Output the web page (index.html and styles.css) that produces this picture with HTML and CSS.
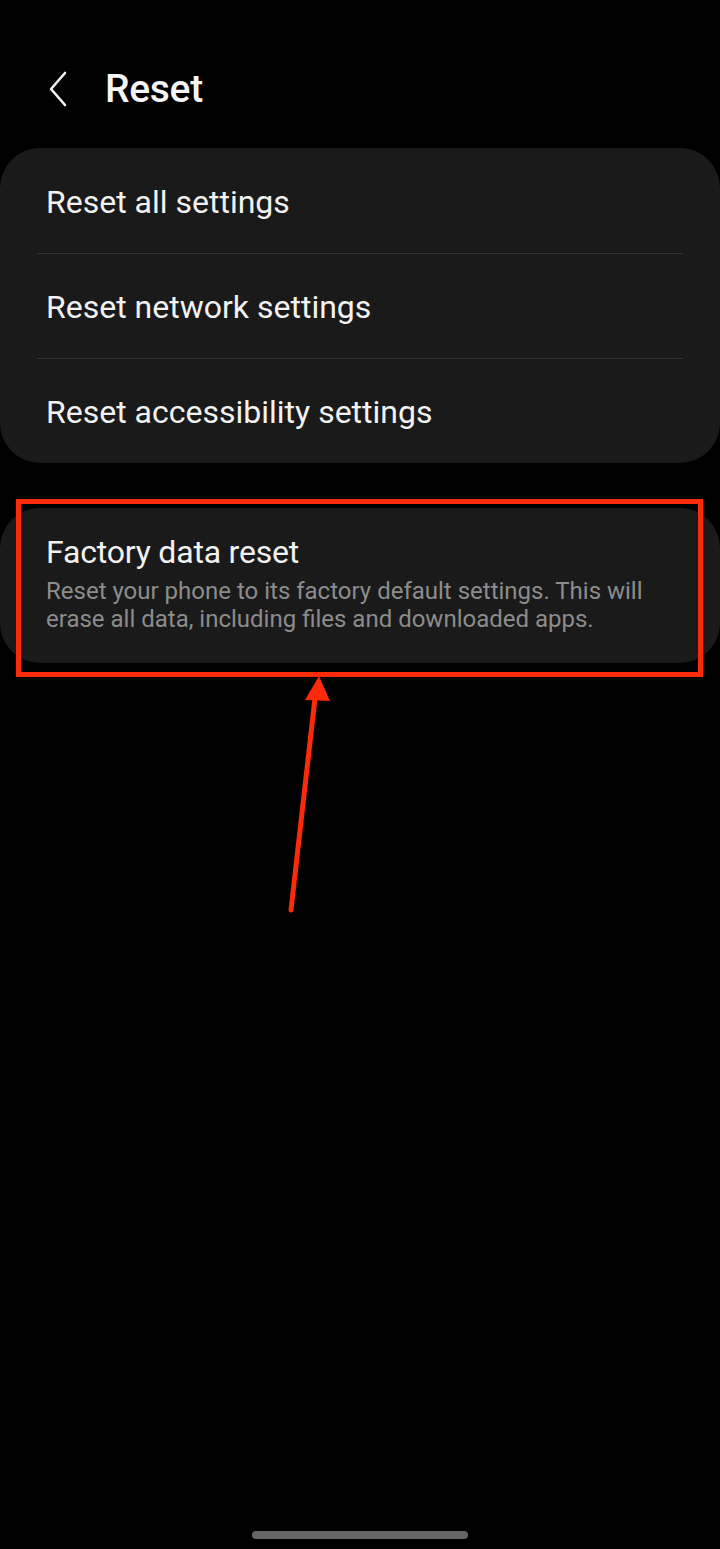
FILE: index.html
```html
<!DOCTYPE html>
<html lang="en">
<head>
<meta charset="utf-8">
<title>Reset</title>
<link rel="stylesheet" href="styles.css">
</head>
<body>
<div class="screen">
  <header class="header">
    <svg class="back" width="20" height="36" viewBox="0 0 20 36" aria-hidden="true">
      <path d="M17 2 L3 18 L17 34" fill="none" stroke="#f2f2f2" stroke-width="2.6" stroke-linecap="round" stroke-linejoin="round"/>
    </svg>
    <h1 class="title">Reset</h1>
  </header>

  <section class="card">
    <div class="row">Reset all settings</div>
    <div class="row">Reset network settings</div>
    <div class="row">Reset accessibility settings</div>
  </section>

  <section class="card card-factory">
    <div class="item-title">Factory data reset</div>
    <div class="item-sub">Reset your phone to its factory default settings. This will erase all data, including files and downloaded apps.</div>
  </section>

  <div class="highlight"></div>
  <svg class="arrow" width="720" height="1549" viewBox="0 0 720 1549" aria-hidden="true">
    <line x1="291" y1="910" x2="315" y2="698" stroke="#fa2a0a" stroke-width="5" stroke-linecap="round"/>
    <polygon points="319,676 305,700 330,701" fill="#fa2a0a"/>
  </svg>

  <div class="home-bar"></div>
</div>
</body>
</html>
```

FILE: styles.css
```css
html, body {
  margin: 0;
  padding: 0;
  background: #000;
}

.screen {
  position: relative;
  width: 720px;
  height: 1549px;
  background: #000;
  font-family: Roboto, "Noto Sans", "Liberation Sans", sans-serif;
  color: #f2f2f2;
  overflow: hidden;
}

.header {
  height: 148px;
  box-sizing: border-box;
  padding: 30px 0 0 48px;
  display: flex;
  align-items: center;
}

.back {
  display: block;
  margin-right: 37px;
}

.title {
  margin: 0;
  font-size: 39px;
  font-weight: 500;
  letter-spacing: -0.3px;
  color: #f5f5f5;
}

.card {
  background: #1a1a1a;
  border-radius: 40px;
  display: flex;
  flex-direction: column;
}

.row {
  height: 105px;
  box-sizing: border-box;
  padding: 3px 46px 0;
  display: flex;
  align-items: center;
  font-size: 32px;
  color: #f2f2f2;
  position: relative;
}

.row + .row::before {
  content: "";
  position: absolute;
  top: 0;
  left: 37px;
  right: 37px;
  height: 1px;
  background: #343434;
}

.card-factory {
  margin-top: 45px;
  height: 155px;
  box-sizing: border-box;
  padding: 26px 46px 0;
}

.item-title {
  font-size: 32px;
  line-height: 36px;
  letter-spacing: -0.2px;
  color: #f2f2f2;
}

.item-sub {
  margin-top: 7px;
  font-size: 24px;
  line-height: 28px;
  color: #8c8c8c;
}

.highlight {
  position: absolute;
  left: 16px;
  top: 499px;
  width: 687px;
  height: 178px;
  box-sizing: border-box;
  border: 5px solid #fa2a0a;
}

.arrow {
  position: absolute;
  left: 0;
  top: 0;
}

.home-bar {
  position: absolute;
  left: 252px;
  top: 1531px;
  width: 216px;
  height: 8px;
  border-radius: 4px;
  background: #666;
}
```
